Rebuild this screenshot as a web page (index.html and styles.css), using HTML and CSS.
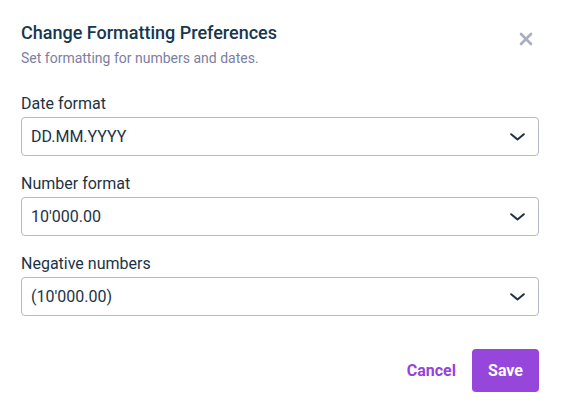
FILE: index.html
```html
<!DOCTYPE html>
<html>
<head>
<meta charset="utf-8">
<link rel="stylesheet" href="styles.css">
</head>
<body>
<div class="dialog">
  <div class="header">
    <div class="titles">
      <h1 class="title">Change Formatting Preferences</h1>
      <p class="subtitle">Set formatting for numbers and dates.</p>
    </div>
    <button class="close" aria-label="Close">
      <svg width="14" height="14" viewBox="0 0 14 14"><path d="M2 2L12 12M12 2L2 12" stroke="#a9adc3" stroke-width="2.6" stroke-linecap="round"/></svg>
    </button>
  </div>
  <div class="fields">
    <div class="field">
      <label class="label">Date format</label>
      <div class="select"><span>DD.MM.YYYY</span><svg class="chev" width="15" height="8" viewBox="0 0 15 8"><path d="M1.2 1.2L7.5 6.5L13.8 1.2" fill="none" stroke="#1c3346" stroke-width="2" stroke-linecap="round" stroke-linejoin="round"/></svg></div>
    </div>
    <div class="field">
      <label class="label">Number format</label>
      <div class="select"><span>10'000.00</span><svg class="chev" width="15" height="8" viewBox="0 0 15 8"><path d="M1.2 1.2L7.5 6.5L13.8 1.2" fill="none" stroke="#1c3346" stroke-width="2" stroke-linecap="round" stroke-linejoin="round"/></svg></div>
    </div>
    <div class="field">
      <label class="label">Negative numbers</label>
      <div class="select"><span>(10'000.00)</span><svg class="chev" width="15" height="8" viewBox="0 0 15 8"><path d="M1.2 1.2L7.5 6.5L13.8 1.2" fill="none" stroke="#1c3346" stroke-width="2" stroke-linecap="round" stroke-linejoin="round"/></svg></div>
    </div>
  </div>
  <div class="actions">
    <button class="cancel">Cancel</button>
    <button class="save">Save</button>
  </div>
</div>
</body>
</html>
```
FILE: styles.css
```css
html, body {
  margin: 0;
  padding: 0;
  background: #ffffff;
}
body {
  font-family: Roboto, "Liberation Sans", sans-serif;
  width: 561px;
  height: 412px;
  overflow: hidden;
}
.dialog {
  padding: 20px 22px 0 21px;
}
.header {
  display: flex;
  justify-content: space-between;
  align-items: flex-start;
}
.title {
  margin: 0;
  font-size: 18px;
  font-weight: 500;
  line-height: 26px;
  color: #16374e;
}
.subtitle {
  margin: 2px 0 0;
  font-size: 14px;
  line-height: 20px;
  color: #7b80a2;
}
.close {
  border: 0;
  background: none;
  padding: 0;
  margin: 12px 6px 0 0;
  width: 14px;
  height: 14px;
  display: flex;
  cursor: pointer;
}
.fields {
  margin-top: 26px;
  display: flex;
  flex-direction: column;
  gap: 18px;
}
.field {
  display: flex;
  flex-direction: column;
  gap: 3px;
}
.label {
  font-size: 16px;
  line-height: 20px;
  color: #1c3346;
}
.select {
  height: 37px;
  border: 1px solid #b5bacb;
  border-radius: 4px;
  display: flex;
  align-items: center;
  justify-content: space-between;
  padding: 0 13px 0 9px;
  font-size: 16px;
  color: #1c3346;
}
.chev {
  display: block;
}
.actions {
  margin-top: 33px;
  display: flex;
  justify-content: flex-end;
  align-items: center;
  gap: 16px;
}
.cancel {
  border: 0;
  background: none;
  padding: 0;
  font-family: Roboto, "Liberation Sans", sans-serif;
  font-size: 16px;
  font-weight: 700;
  color: #9444d8;
}
.save {
  border: 0;
  background: #9646da;
  color: #ffffff;
  border-radius: 4px;
  width: 67px;
  height: 43px;
  font-family: Roboto, "Liberation Sans", sans-serif;
  font-size: 16px;
  font-weight: 700;
}
```
